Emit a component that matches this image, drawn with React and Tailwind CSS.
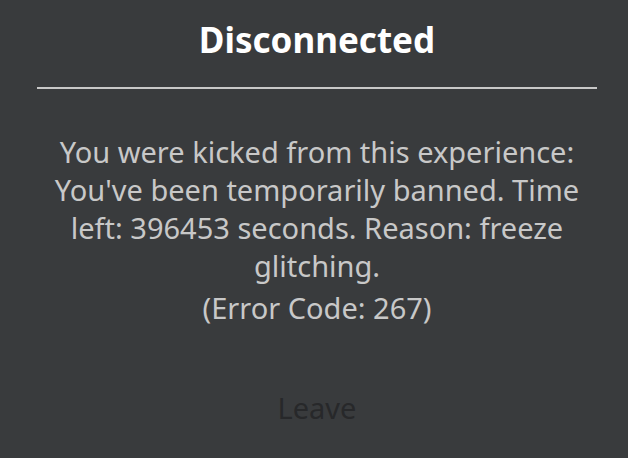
import React from 'react';

export default function App() {
  return (
    <div
      className="w-[628px] h-[458px] bg-[#393b3d] flex flex-col items-center overflow-hidden pl-[6px]"
      style={{ fontFamily: '"Noto Sans", "Open Sans", sans-serif' }}
    >
      {/* Title */}
      <h1 className="mt-[17px] h-[46px] text-[35px] leading-[46px] font-bold text-white">Disconnected</h1>

      {/* Divider */}
      <div className="mt-[24px] w-[560px] h-[2px] bg-[#c8c8c8]" />

      {/* Message */}
      <div className="mt-[44px] w-[560px] text-center text-[29px] leading-[38px] text-[#c8c8c8]">
        <p>
          You were kicked from this experience: You've been temporarily banned. Time left: 396453 seconds. Reason:
          freeze glitching.
        </p>
        <p className="mt-[4px]">(Error Code: 267)</p>
      </div>

      {/* Button */}
      <button className="mt-[62px] text-[29px] leading-[38px] text-[#27282a]">Leave</button>
    </div>
  );
}
